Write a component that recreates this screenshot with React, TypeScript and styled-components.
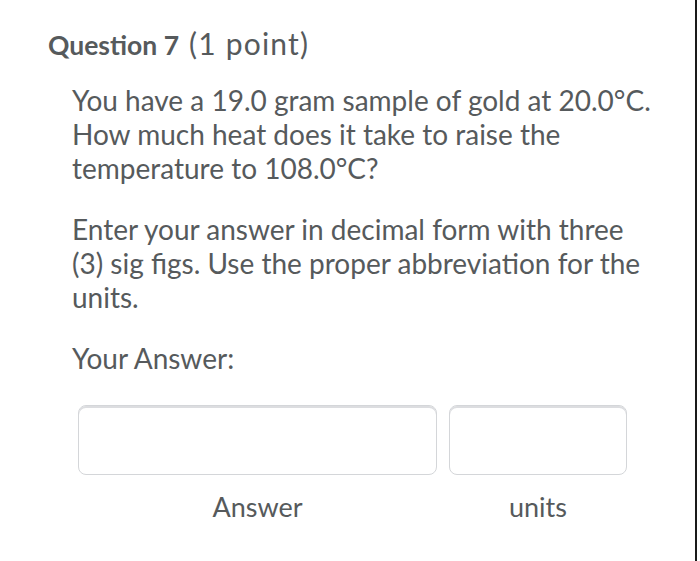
import styled, { createGlobalStyle } from "styled-components";

const GlobalStyle = createGlobalStyle`
  html, body {
    margin: 0;
    padding: 0;
    background: #ffffff;
  }
  body {
    font-family: Lato, "Open Sans", sans-serif;
    color: #565a5c;
  }
`;

const Page = styled.div`
  width: 697px;
  height: 561px;
  box-sizing: border-box;
  border-right: 2px solid #1a1a1a;
  padding: 23px 0 0 48px;
  overflow: hidden;
`;

const Title = styled.h2`
  margin: 0;
  font-size: 30px;
  line-height: 40px;
  font-weight: 400;
  color: #565a5c;
`;

const Strong = styled.span`
  font-size: 26.5px;
  font-weight: 700;
`;

const Points = styled.span`
  margin-left: 10px;
  letter-spacing: 1.2px;
`;

const Body = styled.div`
  padding-left: 24px;
  margin-top: 18px;
`;

const Para = styled.p`
  margin: 0 0 27px;
  font-size: 28px;
  line-height: 34px;
  color: #565a5c;
`;

const Inputs = styled.div`
  display: flex;
  gap: 12px;
  margin-top: 30px;
  padding-left: 30px;
`;

const Field = styled.div<{ $w: number }>`
  width: ${(p) => p.$w}px;
  display: flex;
  flex-direction: column;
  align-items: center;
`;

const Box = styled.div`
  width: 100%;
  height: 70px;
  box-sizing: border-box;
  border: 1px solid #d4d6d9;
  border-radius: 8px;
  box-shadow: inset 0 2px 0 #dcdde0;
  background: #fff;
`;

const Label = styled.div`
  margin-top: 15px;
  font-size: 27px;
  line-height: 34px;
  color: #565a5c;
`;

export default function App() {
  return (
    <>
      <GlobalStyle />
      <Page>
        <Title>
          <Strong>Question 7</Strong>
          <Points>(1 point)</Points>
        </Title>
        <Body>
          <Para>
            You have a 19.0 gram sample of gold at 20.0°C.
            <br />
            How much heat does it take to raise the
            <br />
            temperature to 108.0°C?
          </Para>
          <Para>
            Enter your answer in decimal form with three
            <br />
            (3) sig figs. Use the proper abbreviation for the
            <br />
            units.
          </Para>
          <Para>Your Answer:</Para>
        </Body>
        <Inputs>
          <Field $w={359}>
            <Box />
            <Label>Answer</Label>
          </Field>
          <Field $w={178}>
            <Box />
            <Label>units</Label>
          </Field>
        </Inputs>
      </Page>
    </>
  );
}
